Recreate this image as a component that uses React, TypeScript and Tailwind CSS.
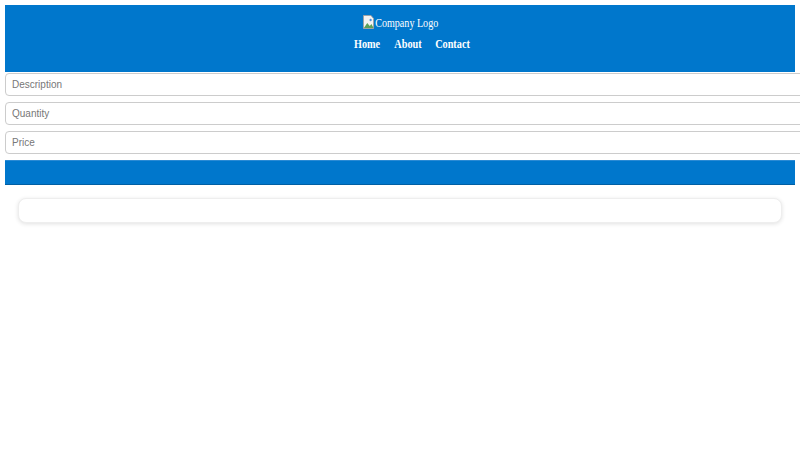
import React from 'react';

function BrokenImage() {
  return (
    <svg width="16" height="16" viewBox="0 0 16 16" className="inline-block align-[-3px]">
      <path d="M1.5 1.5h9l3 3v10h-12z" fill="#f3f3f3" stroke="#a0a0a0" />
      <path d="M2 14l4-5 3 3 2-2 2.5 4z" fill="#5aa05a" />
      <circle cx="10" cy="6" r="1.3" fill="#4a90d9" />
    </svg>
  );
}

export default function App() {
  return (
    <div className="p-[5px] bg-white min-h-[450px] font-['Liberation_Serif',serif]">
      <header className="bg-[#0077cc] h-[67px] pt-[9px] text-white text-center">
        <div className="text-[12px] leading-[16px] h-[16px] scale-x-[0.84]">
          <BrokenImage />
          <span>Company Logo</span>
        </div>
        <nav className="mt-[6px] pl-[22px] flex justify-center gap-[15px] text-[12.5px] font-bold leading-[16px]">
          <a className="w-[26px] scale-x-[0.82] whitespace-nowrap flex justify-center">Home</a>
          <a className="w-[26px] scale-x-[0.82] whitespace-nowrap flex justify-center">About</a>
          <a className="w-[33px] scale-x-[0.82] whitespace-nowrap flex justify-center">Contact</a>
        </nav>
      </header>
      <form className="mt-px flex flex-col">
        <input
          placeholder="Description"
          className="box-content w-full h-[11px] py-[5px] px-[6px] border border-[#ccc] rounded-[4px] text-[10px] font-['Liberation_Sans',Arial,sans-serif] placeholder:text-[#777] outline-none"
        />
        <input
          placeholder="Quantity"
          className="box-content w-full h-[11px] mt-[6px] py-[5px] px-[6px] border border-[#ccc] rounded-[4px] text-[10px] font-['Liberation_Sans',Arial,sans-serif] placeholder:text-[#777] outline-none"
        />
        <input
          placeholder="Price"
          className="box-content w-full h-[11px] mt-[6px] py-[5px] px-[6px] border border-[#ccc] rounded-[4px] text-[10px] font-['Liberation_Sans',Arial,sans-serif] placeholder:text-[#777] outline-none"
        />
        <button
          type="button"
          className="mt-[6px] h-[25px] w-full bg-[#0077cc] border-t border-t-[#2a8ad4] border-b border-b-[#005fa3]"
        />
      </form>
      <div className="mx-[13px] mt-[13px] h-[25px] rounded-[8px] bg-white border border-[#eee] shadow-[0_1px_4px_rgba(0,0,0,0.12)]" />
    </div>
  );
}
